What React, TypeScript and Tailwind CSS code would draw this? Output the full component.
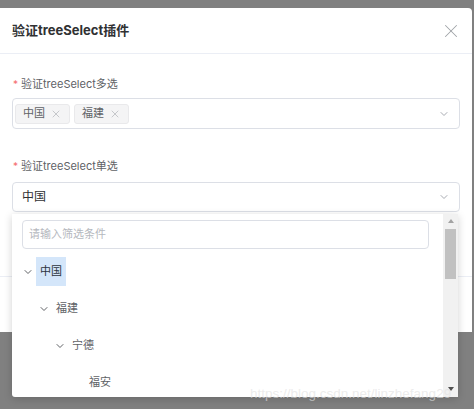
import { X, ChevronDown } from "lucide-react";

const tree = [
  { label: "中国", level: 0, arrow: true, active: true },
  { label: "福建", level: 1, arrow: true },
  { label: "宁德", level: 2, arrow: true },
  { label: "福安", level: 3, arrow: false },
];

const indent = ["pl-0", "pl-[16px]", "pl-[32px]", "pl-[63px]"];

function Label({ text }: { text: string }) {
  return (
    <div className="flex items-center h-[20px] pl-[13px] text-[11px] text-[#606266]">
      <span className="text-[#f56c6c] mr-[3px] text-[10px]">*</span>
      {text}
    </div>
  );
}

export default function App() {
  return (
    <div
      className="relative w-[474px] h-[409px] overflow-hidden bg-[#808080] pt-[8px]"
      style={{ fontFamily: "Inter, 'Noto Sans CJK SC', sans-serif" }}
    >
      {/* dialog */}
      <div className="w-[472px] h-[324px] bg-white rounded-tr-[4px] flex flex-col">
        <div className="h-[46px] flex items-center justify-between pl-[12px] pr-[10px] border-b border-[#ebeef5]">
          <span className="text-[13px] font-bold text-[#303133]">验证treeSelect插件</span>
          <X className="w-[22px] h-[22px] text-[#a0a3a8]" strokeWidth={1.1} />
        </div>

        <div className="pt-[20px]">
          <Label text="验证treeSelect多选" />
          <div className="mt-[4px] mx-[12px] h-[31px] border border-[#dcdfe6] rounded-[4px] flex items-center pl-[2px] pr-[9px]">
            <div className="flex gap-[4px] flex-1">
              {["中国", "福建"].map((t) => (
                <span
                  key={t}
                  className="h-[20px] px-[7px] flex items-center gap-[5px] bg-[#f4f4f5] border border-[#e9e9eb] rounded-[3px] text-[11px] text-[#606266]"
                >
                  {t}
                  <X className="w-[12px] h-[12px] text-[#b0b3b8]" strokeWidth={1.4} />
                </span>
              ))}
            </div>
            <ChevronDown className="w-[12px] h-[12px] text-[#a8abb2]" />
          </div>

          <div className="mt-[27px]">
            <Label text="验证treeSelect单选" />
          </div>
          <div className="mt-[6px] mx-[12px] h-[30px] border border-[#dcdfe6] rounded-[4px] flex items-center justify-between pl-[9px] pr-[9px]">
            <span className="text-[12px] text-[#303133]">中国</span>
            <ChevronDown className="w-[12px] h-[12px] text-[#a8abb2]" />
          </div>
        </div>

        <div className="mt-[64px] border-t border-[#ebeef5]" />
      </div>

      {/* dropdown */}
      <div className="absolute left-[12px] top-[214px] w-[446px] h-[183px] bg-white rounded-b-[3px] shadow-[0_2px_8px_rgba(0,0,0,0.18)] flex">
        <div className="flex-1 pt-[6px] pl-[10px] pr-[14px]">
          <div className="h-[29px] border border-[#dcdfe6] rounded-[4px] flex items-center px-[6px] text-[11px] text-[#b5b8be]">
            请输入筛选条件
          </div>
          <div className="mt-[4px] flex flex-col">
            {tree.map((n) => (
              <div key={n.label} className={`h-[37px] flex items-center ${indent[n.level]}`}>
                {n.arrow && <ChevronDown className="w-[12px] h-[12px] text-[#606266] mr-[2px]" strokeWidth={2} />}
                <span
                  className={`h-[29px] flex items-center px-[4px] text-[11px] ${
                    n.active ? "bg-[#d4e6fa] text-[#2c3440]" : "text-[#606266]"
                  }`}
                >
                  {n.label}
                </span>
              </div>
            ))}
          </div>
        </div>
        <div className="w-[15px] bg-[#f1f1f1] flex flex-col items-center">
          <span className="mt-[5px] w-0 h-0 border-l-[3px] border-r-[3px] border-b-[4px] border-l-transparent border-r-transparent border-b-[#a3a3a3]" />
          <div className="mt-[6px] w-[11px] h-[50px] bg-[#c1c1c1]" />
          <div className="flex-1" />
          <span className="mb-[6px] w-0 h-0 border-l-[3px] border-r-[3px] border-t-[4px] border-l-transparent border-r-transparent border-t-[#505050]" />
        </div>
      </div>

      {/* watermark */}
      <span
        className="absolute left-[250px] top-[384px] text-[13.5px] text-[rgba(225,225,225,0.65)] whitespace-nowrap"
        style={{ fontFamily: "'Liberation Sans', sans-serif" }}
      >
        https://blog.csdn.net/linzhefang29
      </span>
    </div>
  );
}
